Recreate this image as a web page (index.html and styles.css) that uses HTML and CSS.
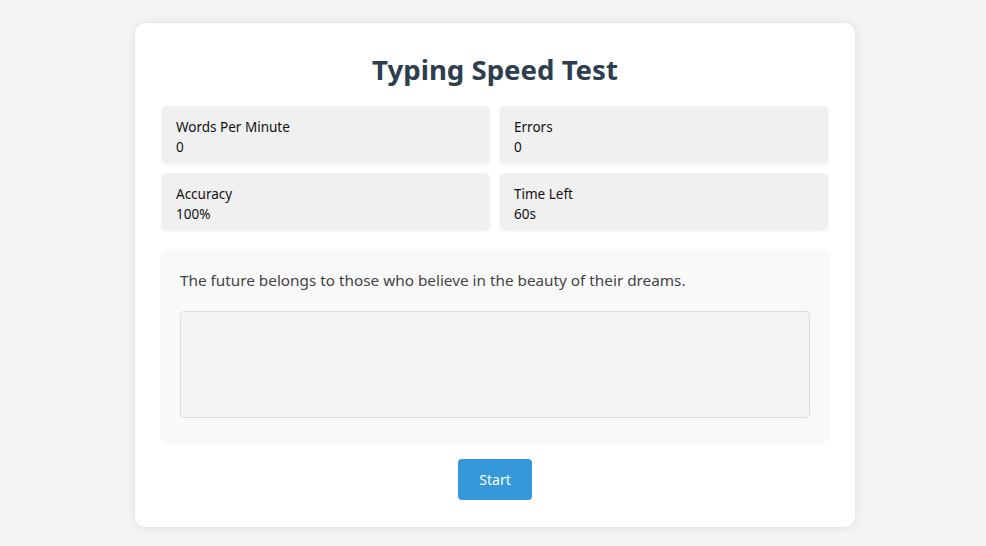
FILE: index.html
```html
<!DOCTYPE html>
<html lang="en">
<head>
<meta charset="utf-8">
<title>Typing Speed Test</title>
<link rel="stylesheet" href="styles.css">
</head>
<body>
<main class="container">
  <h1 class="title">Typing Speed Test</h1>
  <section class="stats">
    <div class="stat"><div class="stat-label">Words Per Minute</div><div class="stat-value">0</div></div>
    <div class="stat"><div class="stat-label">Errors</div><div class="stat-value">0</div></div>
    <div class="stat"><div class="stat-label">Accuracy</div><div class="stat-value">100%</div></div>
    <div class="stat"><div class="stat-label">Time Left</div><div class="stat-value">60s</div></div>
  </section>
  <section class="test-area">
    <p class="quote">The future belongs to those who believe in the beauty of their dreams.</p>
    <textarea class="input" aria-label="Type here"></textarea>
  </section>
  <div class="actions">
    <button class="btn" type="button">Start</button>
  </div>
</main>
</body>
</html>
```
FILE: styles.css
```css
html, body {
  margin: 0;
  padding: 0;
}
body {
  background: #f4f4f4;
  font-family: "Noto Sans", "Open Sans", sans-serif;
  padding: 23px 0 19px 4px;
}
.container {
  width: 720px;
  box-sizing: border-box;
  margin: 0 auto;
  background: #fff;
  border-radius: 10px;
  box-shadow: 0 0 10px rgba(0,0,0,0.1);
  padding: 27px 27px 27px;
}
.title {
  margin: 0 0 18px;
  text-align: center;
  color: #2c3e50;
  font-size: 27.6px;
  line-height: 38px;
  font-weight: 700;
}
.stats {
  display: grid;
  grid-template-columns: 1fr 1fr;
  gap: 10px;
  margin-bottom: 20px;
}
.stat {
  background: #f0f0f0;
  border-radius: 5px;
  box-shadow: 0 1px 3px rgba(0,0,0,0.08);
  padding: 11px 14px 0;
  height: 57px;
  box-sizing: border-box;
  color: #111;
  font-size: 13.5px;
  line-height: 20px;
}
.test-area {
  background: #f9f9f9;
  border-radius: 5px;
  box-shadow: 0 1px 4px rgba(0,0,0,0.06);
  padding: 18px 18px 23px;
}
.quote {
  margin: 0 0 19px;
  font-size: 15.3px;
  line-height: 24px;
  color: #444;
}
.input {
  display: block;
  width: 100%;
  height: 107px;
  box-sizing: border-box;
  background: #f5f5f5;
  border: 1px solid #dcdcdc;
  border-radius: 4px;
  resize: none;
  margin: 0;
}
.actions {
  display: flex;
  justify-content: center;
  margin-top: 18px;
}
.btn {
  background: #3498db;
  color: #fff;
  border: none;
  border-radius: 4px;
  width: 74px;
  height: 41px;
  font-family: inherit;
  font-size: 14px;
}
```
